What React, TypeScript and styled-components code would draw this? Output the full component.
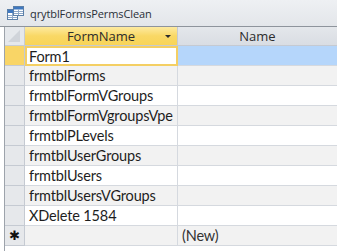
import React from "react";
import styled, { createGlobalStyle, css } from "styled-components";

const Global = createGlobalStyle`
  html, body { margin: 0; padding: 0; background: #ffffff; }
  body { width: 337px; height: 251px; overflow: hidden; }
`;

const Window = styled.div`
  width: 337px;
  height: 251px;
  overflow: hidden;
  display: flex;
  flex-direction: column;
  background: #ffffff;
`;

const TitleBar = styled.div`
  height: 27px;
  flex: none;
  display: flex;
  align-items: center;
  gap: 6px;
  padding-left: 7px;
  box-sizing: border-box;
  background: linear-gradient(#eef0f3, #e3e6ea);
  border-bottom: 1px solid #8e949c;
  font-family: "Open Sans", "Noto Sans", sans-serif;
  font-size: 11px;
  letter-spacing: -0.1px;
  color: #2a2f37;
`;

const TitleText = styled.span`
  padding-top: 1px;
`;

const Grid = styled.div`
  flex: 1;
  display: grid;
  grid-template-columns: 20px 153px 160px;
  grid-auto-rows: 20px;
  grid-template-rows: 19px;
  margin-left: 4px;
  border-left: 1px solid #9da3ab;
  font-family: "Lato", "Open Sans", sans-serif;
  font-size: 14.5px;
  letter-spacing: -0.15px;
  color: #1e1e1e;
`;

const Corner = styled.div`
  box-sizing: border-box;
  border-right: 1px solid #c7ccd3;
  border-bottom: 1px solid #c7ccd3;
  background: #e5e8ec;
  position: relative;
  overflow: hidden;
`;

const HeaderCell = styled.div<{ $active?: boolean }>`
  box-sizing: border-box;
  display: flex;
  align-items: center;
  justify-content: center;
  position: relative;
  font-family: "Open Sans", "Noto Sans", sans-serif;
  font-size: 13px;
  letter-spacing: 0;
  color: #2c2c2c;
  border-right: 1px solid #c5cad2;
  border-bottom: 1px solid #c5cad2;
  ${(p) =>
    p.$active
      ? css`
          background: linear-gradient(#fdeaa0, #f9d865 50%, #f8d458);
        `
      : css`
          background: linear-gradient(#e4e7eb, #d9dde3);
        `}
`;

const DropArrow = styled.span`
  position: absolute;
  right: 6px;
  top: 8px;
  width: 0;
  height: 0;
  border-left: 3px solid transparent;
  border-right: 3px solid transparent;
  border-top: 3px solid #2a2a2a;
`;

const Selector = styled.div<{ $current?: boolean }>`
  box-sizing: border-box;
  border-right: 1px solid #c5cad2;
  border-bottom: 1px solid #c5cad2;
  background: ${(p) => (p.$current ? "#f9d566" : "#e6e8eb")};
  display: flex;
  align-items: center;
  justify-content: center;
  font-family: "DejaVu Sans", sans-serif;
  font-size: 13px;
  color: #111;
`;

const Cell = styled.div<{ $alt?: boolean; $focus?: boolean; $selected?: boolean }>`
  box-sizing: border-box;
  display: flex;
  align-items: center;
  padding-left: 4px;
  white-space: nowrap;
  overflow: hidden;
  border-right: 1px solid #d5d9df;
  border-bottom: 1px solid #d5d9df;
  background: ${(p) => (p.$selected ? "#b5d6fb" : p.$alt ? "#f2f2f2" : "#ffffff")};
  ${(p) =>
    p.$focus &&
    css`
      border: 2px solid #f4cf63;
      padding-left: 2px;
      background: #ffffff;
    `}
`;

const NewText = styled.span`
  color: #333;
`;

const TableIcon = () => (
  <svg width="17" height="14" viewBox="0 0 17 14">
    <rect x="0.5" y="3.5" width="10" height="10" fill="#ffffff" stroke="#5b7fa8" />
    <rect x="1" y="4" width="9" height="3" fill="#3f78c0" />
    <line x1="1" y1="9.5" x2="10" y2="9.5" stroke="#8fa9c9" />
    <line x1="1" y1="11.5" x2="10" y2="11.5" stroke="#8fa9c9" />
    <line x1="5.5" y1="7" x2="5.5" y2="13" stroke="#8fa9c9" />
    <rect x="6.5" y="0.5" width="10" height="9" fill="#ffffff" stroke="#5b7fa8" />
    <rect x="7" y="1" width="9" height="2.5" fill="#3f78c0" />
    <line x1="7" y1="5.5" x2="16" y2="5.5" stroke="#8fa9c9" />
    <line x1="7" y1="7.5" x2="16" y2="7.5" stroke="#8fa9c9" />
    <line x1="11.5" y1="3.5" x2="11.5" y2="9" stroke="#8fa9c9" />
  </svg>
);

const CornerMark = () => (
  <svg width="19" height="18" viewBox="0 0 19 18" style={{ position: "absolute", left: 0, top: 0 }}>
    <polygon points="15,3 15,15 3,15" fill="#d0d4da" />
  </svg>
);

const rows = [
  "Form1",
  "frmtblForms",
  "frmtblFormVGroups",
  "frmtblFormVgroupsVpe",
  "frmtblPLevels",
  "frmtblUserGroups",
  "frmtblUsers",
  "frmtblUsersVGroups",
  "XDelete 1584",
];

export default function App() {
  return (
    <Window>
      <Global />
      <TitleBar>
        <TableIcon />
        <TitleText>qrytblFormsPermsClean</TitleText>
      </TitleBar>
      <Grid>
        <Corner>
          <CornerMark />
        </Corner>
        <HeaderCell $active>
          FormName
          <DropArrow />
        </HeaderCell>
        <HeaderCell>Name</HeaderCell>
        {rows.map((name, i) => (
          <React.Fragment key={name}>
            <Selector $current={i === 0} />
            <Cell $alt={i % 2 === 1} $focus={i === 0}>
              {name}
            </Cell>
            <Cell $alt={i % 2 === 1} $selected={i === 0} />
          </React.Fragment>
        ))}
        <Selector>✱</Selector>
        <Cell $alt />
        <Cell $alt>
          <NewText>(New)</NewText>
        </Cell>
      </Grid>
    </Window>
  );
}
